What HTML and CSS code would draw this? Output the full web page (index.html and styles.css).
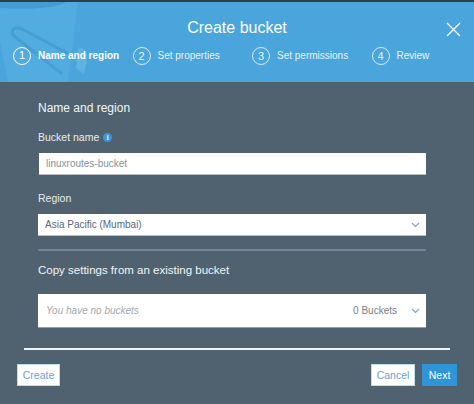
FILE: index.html
```html
<!DOCTYPE html>
<html lang="en">
<head>
<meta charset="utf-8">
<title>Create bucket</title>
<link rel="stylesheet" href="styles.css">
</head>
<body>
<div class="modal">
  <header class="header">
    <svg class="art" width="120" height="80" viewBox="0 0 120 80" aria-hidden="true">
      <path class="art-body" d="M0 0H78L68 80H8L0 40Z"/>
      <path class="art-rim" d="M0 0H66C58 6 30 8 0 6Z"/>
      <path class="art-handle" d="M14 34C9 28 15 24 22 27L80 58"/>
      <path class="art-handle2" d="M14 34L62 72"/>
      <path class="art-tab" d="M78 47C84 44 87 50 87 58L84 72L76 66Z"/>
    </svg>
    <h1 class="title">Create bucket</h1>
    <svg class="close" width="15" height="15" viewBox="0 0 15 15" aria-hidden="true"><path d="M1 1L14 14M14 1L1 14"/></svg>
    <ol class="steps">
      <li class="step active"><span class="num">1</span><span>Name and region</span></li>
      <li class="step"><span class="num">2</span><span>Set properties</span></li>
      <li class="step"><span class="num">3</span><span>Set permissions</span></li>
      <li class="step"><span class="num">4</span><span>Review</span></li>
    </ol>
  </header>
  <main class="content">
    <h2 class="heading">Name and region</h2>
    <div class="label first">Bucket name <span class="info">i</span></div>
    <div class="field input">linuxroutes-bucket</div>
    <div class="label second">Region</div>
    <div class="field select">
      <span>Asia Pacific (Mumbai)</span>
      <svg class="chev" width="9" height="6" viewBox="0 0 9 6" aria-hidden="true"><path d="M1 1L4.500 4.500L8 1"/></svg>
    </div>
    <hr class="rule">
    <h2 class="heading copy">Copy settings from an existing bucket</h2>
    <div class="field copybox">
      <em class="empty">You have no buckets</em>
      <span class="count">0 Buckets</span>
      <svg class="chev" width="9" height="6" viewBox="0 0 9 6" aria-hidden="true"><path d="M1 1L4.500 4.500L8 1"/></svg>
    </div>
  </main>
  <footer class="footer">
    <div class="footline"></div>
    <div class="actions">
      <button class="btn create">Create</button>
      <button class="btn cancel">Cancel</button>
      <button class="btn next">Next</button>
    </div>
  </footer>
</div>
</body>
</html>
```
FILE: styles.css
```css
* { box-sizing: border-box; }
html, body { margin: 0; height: 100%; }
body {
  background: #50626f;
  font-family: "Liberation Sans", Arial, sans-serif;
  color: #f2f5f7;
  overflow: hidden;
}
.modal { width: 474px; height: 404px; background: #50626f; border-top: 2px solid #2f3d47; }
.header {
  position: relative;
  height: 80px;
  background: #4aa5dc;
  overflow: hidden;
}
.art { position: absolute; left: 0; top: 0; }
.art-body { fill: #52acdf; }
.art-rim { fill: #459cd2; }
.art-handle, .art-handle2 { fill: none; stroke: #459ed6; stroke-width: 3; }
.art-handle2 { stroke-width: 3; }
.art-tab { fill: #5fb3e3; }
.title {
  position: relative;
  margin: 0;
  padding-top: 15px;
  height: 45px;
  text-align: center;
  font-size: 16px;
  line-height: 22px;
  font-weight: 400;
  color: #fff;
}
.close { position: absolute; left: 446px; top: 20px; }
.close path { fill: none; stroke: #fff; stroke-width: 1.300; }
.steps {
  position: relative;
  list-style: none;
  margin: 0;
  padding: 0 0 0 13px;
  display: grid;
  grid-template-columns: repeat(4, 119.500px);
}
.step {
  display: flex;
  align-items: center;
  gap: 7px;
  font-size: 10px;
  line-height: 18px;
  color: #e6f3fb;
}
.step.active { color: #fff; font-weight: 700; }
.num {
  width: 18px;
  height: 18px;
  border: 1px solid #d5ebf8;
  border-radius: 50%;
  font-size: 11px;
  line-height: 16px;
  text-align: center;
  font-weight: 400;
}
.active .num { border-width: 1.500px; border-color: #fff; line-height: 15px; }
.content { padding: 0 48px 0 38px; }
.heading {
  margin: 0;
  font-size: 12px;
  line-height: 16px;
  font-weight: 400;
  color: #f2f5f7;
  padding-top: 18px;
}
.label { font-size: 10.500px; line-height: 14px; color: #e8edf0; display: flex; align-items: center; gap: 4px; }
.label.first { margin-top: 14px; }
.label.second { margin-top: 16px; }
.info {
  width: 9px;
  height: 9px;
  border-radius: 50%;
  background: #3a9ad9;
  color: #fff;
  font-size: 7px;
  line-height: 9px;
  text-align: center;
  font-weight: 700;
}
.field {
  display: flex;
  align-items: center;
  background: #fff;
  font-size: 10px;
  color: #5c6670;
  border-bottom: 1px solid #b9c0c5;
}
.input {
  height: 22px;
  margin: 9px 0 0 1px;
  padding-left: 7px;
  color: #8b9197;
}
.select {
  height: 22px;
  margin-top: 9px;
  padding: 0 6px 0 7px;
  justify-content: space-between;
}
.chev path { fill: none; stroke: #7ba6c8; stroke-width: 1.200; }
.rule { margin: 13px 0 0; border: 0; height: 2px; background: #6f8794; }
.heading.copy { padding-top: 11px; font-size: 11.500px; }
.copybox {
  height: 34px;
  margin-top: 16px;
  padding: 0 6px 0 8px;
  border-bottom-color: #8fa0ab;
}
.empty { color: #a3a8ac; font-style: italic; }
.count { margin-left: auto; margin-right: 14px; color: #777f85; }
.footer { padding: 20px 17px 0; }
.footline { height: 2px; margin: 0 7px; background: #f1f4f6; }
.actions { display: flex; gap: 7px; margin-top: 14px; }
.btn {
  height: 22px;
  padding: 0;
  font: 10.500px/20px "Liberation Sans", Arial, sans-serif;
  background: #fff;
  border: 1px solid #bcdcf0;
  color: #6f9fd2;
}
.create { width: 43px; margin-right: auto; }
.cancel { width: 44px; }
.next { width: 35px; background: #2f95d8; border-color: #2f95d8; color: #fff; }
```
